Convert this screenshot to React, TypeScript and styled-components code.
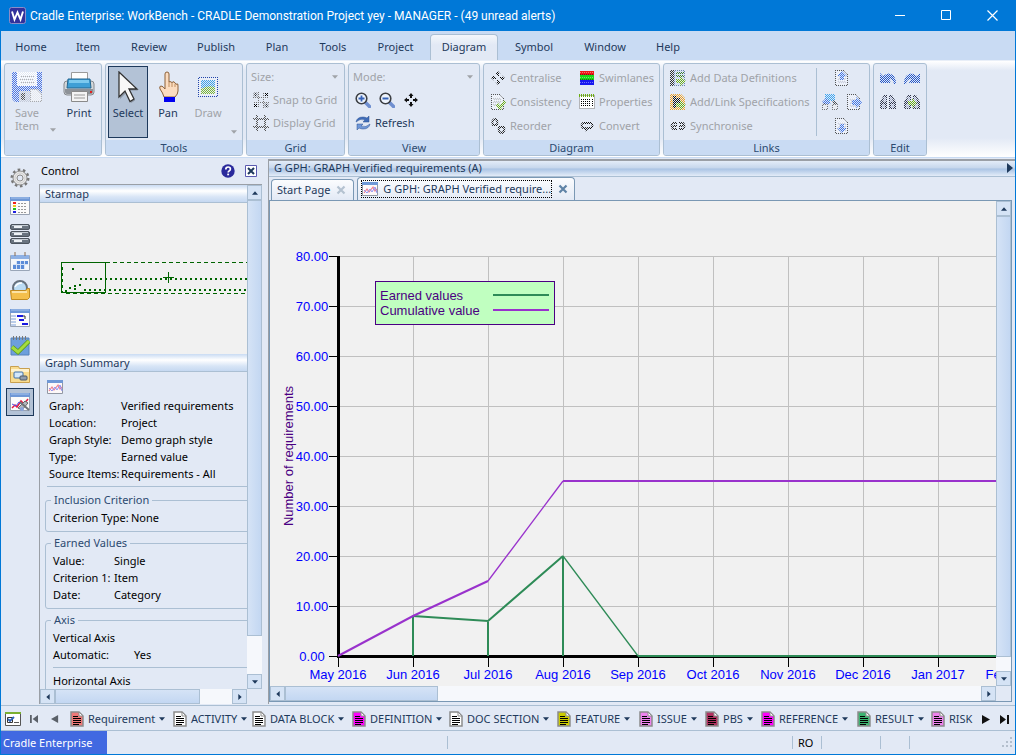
import React from 'react';
import styled, { createGlobalStyle, css } from 'styled-components';

const ui = `"Noto Sans", "Open Sans", sans-serif`;
const c = {
  title: '#0078d7',
  menu: '#c9dbf3',
  face: '#e2e9f5',
  line: '#abbfd3',
  dark: '#7a98b4',
  ink: '#1e395b',
  off: '#a0a3a8',
  caption: '#2c4a70',
  canvas: '#f1f1f1',
};

const GlobalStyle = createGlobalStyle`
  *, *::before, *::after { box-sizing: border-box; }
  body { margin: 0; font-family: ${ui}; font-size: 11px; line-height: 14px; color: #000; }
  button, select { font: inherit; color: inherit; background: none; border: 0; padding: 0; margin: 0; }
  svg { display: block; flex: none; }
`;

const Window = styled.div`
  display: flex;
  flex-direction: column;
  height: 100vh;
  border: 1px solid ${c.title};
  border-top: 0;
  background: ${c.face};
  overflow: hidden;
`;

/* ---------- title bar and menu ---------- */

const TitleBar = styled.header`
  display: flex;
  align-items: center;
  flex: none;
  height: 31px;
  padding-left: 8px;
  background: ${c.title};
  color: #fff;
`;
const Title = styled.h1`
  flex: 1;
  margin: 0 0 0 4px;
  font-family: Roboto, ${ui};
  font-size: 12px;
  font-weight: 400;
  line-height: 16px;
  white-space: nowrap;
`;
const WindowButton = styled.button`
  display: grid;
  place-items: center;
  width: 46px;
  height: 30px;
`;
const Menu = styled.nav`
  display: flex;
  align-items: flex-end;
  flex: none;
  height: 30px;
  background: ${c.menu};
  border-bottom: 1px solid #e9eff8;
`;
const MenuTab = styled.button<{ $w: number; $active?: boolean }>`
  width: ${(p) => p.$w}px;
  height: 26px;
  padding-bottom: 1px;
  color: ${c.ink};
  ${(p) =>
    p.$active &&
    css`
      background: linear-gradient(#f4f7fb, ${c.face} 40%);
      border: 1px solid ${c.line};
      border-bottom: 0;
      border-radius: 4px 4px 0 0;
    `}
`;

/* ---------- ribbon ---------- */

const Ribbon = styled.div`
  display: flex;
  gap: 3px;
  flex: none;
  height: 97px;
  padding: 2px 3px 1px;
  background: linear-gradient(#fff, ${c.face} 10%, ${c.face} 80%, #fff);
  border-bottom: 1px solid ${c.menu};
`;
const GroupBox = styled.section<{ $w: number }>`
  display: flex;
  flex-direction: column;
  flex: none;
  width: ${(p) => p.$w}px;
  border: 1px solid ${c.line};
  border-radius: 3px;
  background: ${c.face};
  overflow: hidden;
`;
const GroupBody = styled.div`
  display: flex;
  flex: 1;
  padding: 2px;
`;
const GroupCaption = styled.h2`
  height: 15px;
  margin: 0;
  background: ${c.menu};
  color: ${c.caption};
  font-size: 11px;
  font-weight: 400;
  line-height: 15px;
  text-align: center;
`;
const BigButton = styled.button<{ $active?: boolean }>`
  display: flex;
  flex-direction: column;
  align-items: center;
  width: 40px;
  height: 72px;
  padding-top: 4px;
  border: 1px solid ${(p) => (p.$active ? c.ink : 'transparent')};
  background: ${(p) => (p.$active ? '#b3c2d6' : 'none')};
  color: ${c.ink};
  line-height: 13px;
  &:disabled { color: ${c.off}; }
  svg { margin-bottom: 3px; }
`;
const MoreButton = styled.button<{ $low?: boolean }>`
  display: flex;
  align-items: flex-end;
  justify-content: center;
  width: 12px;
  padding-bottom: ${(p) => (p.$low ? 4 : 6)}px;
`;
const Column = styled.div<{ $w?: number; $tight?: boolean }>`
  display: flex;
  flex-direction: column;
  flex: ${(p) => (p.$w ? 'none' : 1)};
  width: ${(p) => (p.$w ? `${p.$w}px` : 'auto')};
  margin-top: ${(p) => (p.$tight ? -1 : 0)}px;
  & > * { height: ${(p) => (p.$tight ? 23 : 24)}px; }
`;
const Row = styled.div<{ $center?: boolean }>`
  display: flex;
  align-items: center;
  gap: 8px;
  padding-left: ${(p) => (p.$center ? 0 : 4)}px;
  justify-content: ${(p) => (p.$center ? 'center' : 'flex-start')};
`;
const SmallButton = styled.button`
  display: flex;
  align-items: center;
  gap: 4px;
  padding-left: 4px;
  color: ${c.ink};
  white-space: nowrap;
  &:disabled { color: ${c.off}; }
`;
const IconButton = styled.button`
  display: grid;
  place-items: center;
  flex: none;
  width: 16px;
  height: 16px;
`;
const PickerLabel = styled.label`
  display: flex;
  align-items: center;
  padding: 0 4px 0 2px;
  color: ${c.off};
`;
const Picker = styled.select`
  flex: 1;
  min-width: 0;
  appearance: none;
  &:disabled { opacity: 1; }
`;
const Divider = styled.div`
  width: 1px;
  margin: 2px 0;
  background: ${c.line};
`;

/* ---------- work area ---------- */

const WorkArea = styled.main`
  display: flex;
  flex: 1;
  min-height: 0;
  padding-bottom: 1px;
`;
const Rail = styled.nav`
  display: flex;
  flex-direction: column;
  flex: none;
  width: 38px;
  padding: 6px 0 0 5px;
`;
const RailButton = styled.button<{ $active?: boolean }>`
  display: grid;
  place-items: center;
  width: 28px;
  height: 28px;
  border: 1px solid ${(p) => (p.$active ? c.ink : 'transparent')};
  background: ${(p) => (p.$active ? '#b3c2d6' : 'none')};
`;
const ControlPanel = styled.aside`
  display: flex;
  flex-direction: column;
  flex: none;
  width: 223px;
`;
const ControlHeader = styled.div`
  display: flex;
  align-items: center;
  gap: 7px;
  flex: none;
  height: 26px;
  padding: 0 3px 0 2px;
`;
const ControlTitle = styled.h2`
  flex: 1;
  margin: 0;
  font-size: 11px;
  font-weight: 400;
`;
const ScrollFrame = styled.div<{ $doc?: boolean }>`
  display: grid;
  grid-template-columns: minmax(0, 1fr) 15px;
  grid-template-rows: minmax(0, 1fr) 15px;
  flex: 1;
  min-height: 0;
  border-left: 1px solid ${(p) => (p.$doc ? c.dark : '#9a9fa6')};
  border-top: 1px solid ${(p) => (p.$doc ? c.dark : '#9a9fa6')};
  ${(p) =>
    p.$doc &&
    css`
      border-right: 1px solid ${c.dark};
      border-bottom: 1px solid ${c.dark};
      margin: 0 3px 2px 0;
    `}
`;
const Viewport = styled.div<{ $canvas?: boolean }>`
  overflow: hidden;
  background: ${(p) => (p.$canvas ? c.canvas : c.face)};
`;
const SectionTitle = styled.h3`
  height: 18px;
  margin: 0;
  padding: 1px 0 0 5px;
  font-size: 11px;
  font-weight: 400;
  line-height: 16px;
  color: ${c.ink};
  background: linear-gradient(#c9dbf3, #fff 35%, #d8e5f6 70%, #c5d8f1);
  border-bottom: 1px solid ${c.line};
`;
const Starmap = styled.div`
  height: 151px;
  background: ${c.canvas};
`;
const Summary = styled.div`
  padding-left: 5px;
  width: 260px;
`;
const SummaryIcon = styled.div`
  padding: 7px 0 2px 2px;
`;
const Fields = styled.dl<{ $label: number; $indent?: number }>`
  display: grid;
  grid-template-columns: ${(p) => p.$label}px 1fr;
  grid-auto-rows: 17px;
  margin: 0 0 0 ${(p) => p.$indent ?? 2}px;
  line-height: 17px;
  white-space: nowrap;
  dt, dd { margin: 0; }
`;
const Rule = styled.hr<{ $after: number }>`
  height: 1px;
  margin: 4px 0 ${(p) => p.$after}px 2px;
  border: 0;
  background: ${c.line};
`;
const FieldGroup = styled.fieldset`
  margin: 0 0 4px;
  padding: 2px 0 5px 5px;
  border: 1px solid ${c.line};
  border-radius: 3px;
  legend {
    padding: 0 3px;
    color: ${c.caption};
  }
`;
const Heading = styled.div`
  height: 17px;
  padding-left: 2px;
  line-height: 17px;
`;

/* ---------- scroll bars ---------- */

const Track = styled.div<{ $across?: boolean }>`
  display: flex;
  flex-direction: ${(p) => (p.$across ? 'row' : 'column')};
  background: #f6f8fc;
`;
const TrackButton = styled.button`
  display: grid;
  place-items: center;
  flex: none;
  width: 15px;
  height: 15px;
  border: 1px solid ${c.line};
  background: #d5e3f5;
`;
const TrackRun = styled.div<{ $across?: boolean; $size: number }>`
  flex: 1;
  &::before {
    content: '';
    display: block;
    width: ${(p) => (p.$across ? `${p.$size}%` : '100%')};
    height: ${(p) => (p.$across ? '100%' : `${p.$size}%`)};
    border: 1px solid ${c.line};
    background: linear-gradient(${(p) => (p.$across ? '180deg' : '90deg')}, #d5e3f6, #c3d7f2);
  }
`;

/* ---------- document ---------- */

const Document = styled.section`
  display: flex;
  flex-direction: column;
  flex: 1;
  min-width: 0;
  margin: 1px 0 0 6px;
  border-top: 2px solid #9a9fa6;
  border-left: 1px solid #9a9fa6;
`;
const DocTitle = styled.h2`
  display: flex;
  align-items: center;
  justify-content: space-between;
  flex: none;
  height: 16px;
  margin: 0;
  padding: 0 2px 1px 5px;
  font-size: 11px;
  font-weight: 400;
  line-height: 14px;
  color: ${c.ink};
  background: linear-gradient(#e3ecf8, #c5d6ec 48%, #a9c3e4 52%, #e3ecf8);
  border-bottom: 1px solid ${c.line};
`;
const DocTabs = styled.div`
  display: flex;
  align-items: flex-end;
  flex: none;
  height: 23px;
  padding-left: 2px;
  gap: 3px;
`;
const DocTab = styled.div<{ $active?: boolean }>`
  display: flex;
  align-items: center;
  gap: 6px;
  height: ${(p) => (p.$active ? 24 : 21)}px;
  margin-bottom: ${(p) => (p.$active ? -1 : 0)}px;
  padding: ${(p) => (p.$active ? '0 6px 1px 3px' : '0 7px 0 5px')};
  border: 1px solid ${c.dark};
  border-bottom: 0;
  border-radius: 4px 4px 0 0;
  background: linear-gradient(#fbfcfe, ${c.face});
  color: ${c.ink};
`;
const DocTabName = styled.button<{ $active?: boolean }>`
  display: flex;
  align-items: center;
  gap: 5px;
  height: 18px;
  white-space: nowrap;
  border: ${(p) => (p.$active ? '1px dotted #000' : '0')};
`;
const CloseButton = styled.button`
  display: grid;
  place-items: center;
  width: 10px;
  height: 10px;
`;

/* ---------- bottom bars ---------- */

const ItemBar = styled.footer`
  display: flex;
  align-items: center;
  flex: none;
  height: 26px;
  padding-top: 2px;
  border-top: 1px solid ${c.line};
  border-bottom: 1px solid ${c.line};
`;
const Lead = styled.div`
  display: flex;
  align-items: center;
  gap: 5px;
  flex: none;
  width: 69px;
  padding-left: 4px;
`;
const ItemList = styled.div`
  display: flex;
  flex: 1;
  min-width: 0;
  overflow: hidden;
`;
const ItemButton = styled.button<{ $w: number }>`
  display: flex;
  align-items: center;
  gap: 4px;
  flex: none;
  width: ${(p) => p.$w}px;
  white-space: nowrap;
  color: ${c.ink};
`;
const Trail = styled.div`
  display: flex;
  gap: 10px;
  flex: none;
  padding-right: 6px;
`;
const StatusBar = styled.footer`
  display: flex;
  align-items: center;
  flex: none;
  height: 23px;
`;
const Product = styled.div`
  align-self: stretch;
  width: 106px;
  padding: 5px 0 0 2px;
  background: #4169e1;
  color: #fff;
`;
const StatusCell = styled.div<{ $w?: number; $line?: boolean }>`
  flex: ${(p) => (p.$w ? 'none' : 1)};
  width: ${(p) => (p.$w ? `${p.$w}px` : 'auto')};
  height: 13px;
  line-height: 13px;
  padding-left: 5px;
  border-left: ${(p) => (p.$line ? `1px solid ${c.line}` : '0')};
`;

/* ---------- icons ---------- */

type IconProps = { size?: number; box?: number; off?: boolean; children: React.ReactNode };

/* An icon on a square grid; a disabled one shows through a one-pixel checkerboard. */
const checker = (box: number) =>
  Array.from({ length: box }, (_, y) => `M${y % 2} ${y + 0.5}H${box}`).join('');

function Icon({ size = 16, box = 16, off, children }: IconProps) {
  return (
    <svg width={size} height={size} viewBox={`0 0 ${box} ${box}`} aria-hidden="true">
      {children}
      {off && <path d={checker(box)} stroke={c.face} strokeDasharray="1 1" shapeRendering="crispEdges" />}
    </svg>
  );
}

const arrows = {
  down: 'M0 0h7L3.500 4z',
  up: 'M0 4h7L3.500 0z',
  left: 'M4 0v7L0 3.500z',
  right: 'M0 0v7l4-3.500z',
};
function Arrow({ dir = 'down', color = c.ink }: { dir?: keyof typeof arrows; color?: string }) {
  const upright = dir === 'down' || dir === 'up';
  return (
    <svg
      width={upright ? 6 : 4}
      height={upright ? 4 : 6}
      viewBox={upright ? '0 0 7 4' : '0 0 4 7'}
      aria-hidden="true"
    >
      <path d={arrows[dir]} fill={color} />
    </svg>
  );
}

const AppLogo = () => (
  <svg width="17" height="17" viewBox="0 0 17 17" aria-hidden="true">
    <rect x=".5" y=".5" width="16" height="16" rx="2" fill="#31319c" stroke="#8c8cc8" />
    <path d="M3 4.500l2.500 8L8.500 5.500l3 7L14 4.500" fill="none" stroke="#fff" strokeWidth="1.900" />
  </svg>
);

const SaveIcon = () => (
  <Icon size={32} box={32} off>
    <path d="M1 1h30v30H4l-3-3z" fill="#4a74e4" />
    <path d="M6 1h20v14H6z" fill="#fff" />
    <path d="M9 5.500h14M9 8.500h14M9 11.500h14" stroke="#b0b0b0" />
    <path d="M8 20h14v11H8z" fill="#c4cad8" />
    <path d="M10 22h4v7h-4z" fill="#555" />
    <path d="M19 18h8l4 4v9H19z" fill="#aaa" />
    <path d="M20 19h6l4 4v7H20z" fill="#f6f6f6" />
  </Icon>
);
const PrintIcon = () => (
  <Icon size={32} box={32}>
    <path d="M8.500 1.500h16v8h-16z" fill="#fdfdfd" stroke="#9a9a9a" />
    <rect x="1" y="10" width="30" height="14" rx="3" fill="#d4d7da" stroke="#85898e" />
    <path d="M2 18h28v3q0 2-2 2H4q-2 0-2-2z" fill="#8d9298" />
    <path d="M5 8h22l1 9H4z" fill="#3f9fd6" stroke="#23658f" />
    <path d="M6 9h20v3H6z" fill="#7cc9ee" />
    <path d="M8.500 20.500h16v10h-16z" fill="#f4f4f4" stroke="#8a8a8a" />
    <path d="M11 24h11M11 27h11" stroke="#9a9a9a" />
    <path d="M27 20h2v2h-2z" fill="#e02020" />
  </Icon>
);
const SelectIcon = () => (
  <Icon size={32} box={32}>
    <path d="M7 2v25l6-6 5 10 4-2.500-5-10h8z" fill="#333" opacity=".3" transform="translate(1 1)" />
    <path d="M7 1v25l6-6 5 10.500 4-2.500-5-10h8z" fill="#f8f8f8" stroke="#333" strokeWidth="1.300" />
  </Icon>
);
const HandIcon = () => (
  <Icon size={32} box={32}>
    <path
      d="M13 3q0-2 2-2t2 2v8q1-1 2 0t2 0 2 1 2 1 1 2v5q0 3-3 6H12q-1-4-4-8-1-3 1-3 2 0 4 3z"
      fill="#fbdcc0"
      stroke="#8c6038"
    />
    <path d="M17 11v5M20 12v4M23 13v3" stroke="#c08f60" />
    <path d="M12 26h11v5H12z" fill="#0000f0" />
  </Icon>
);
const DrawIcon = () => (
  <Icon size={32} box={32} off>
    <path d="M6 6h20v20H6z" fill="#2244aa" />
    <path d="M7 7h18v18H7z" fill="#eef1f8" />
    <path d="M9 9h14v8H9z" fill="#3aa0e8" />
    <path d="M9 18q6-4 14-2v7H9z" fill="#7cb82f" />
  </Icon>
);
const SnapIcon = () => (
  <Icon off>
    <path d="M5.500 0v16M10.500 0v16M0 5.500h16M0 10.500h16" stroke="#777" />
    <path d="M1 1l3 3M4 1L1 4M12 1l3 3M15 1l-3 3M1 12l3 3M4 12l-3 3M12 12l3 3M15 12l-3 3" stroke="#000" strokeWidth="1.500" />
  </Icon>
);
const GridIcon = () => (
  <Icon off>
    <path d="M4 0v16M12 0v16M0 4h16M0 12h16" stroke="#555" strokeWidth="2" />
  </Icon>
);
const ZoomIcon = ({ plus }: { plus?: boolean }) => (
  <Icon>
    <path d="M10.500 10.500l4 4" stroke="#6f8fd0" strokeWidth="3.500" strokeLinecap="round" />
    <circle cx="6.500" cy="6.500" r="5.300" fill="#eef4fd" stroke="#3c3f44" strokeWidth="1.600" />
    <path d={plus ? 'M3.500 6.500h6M6.500 3.500v6' : 'M3.500 6.500h6'} stroke="#3562b8" strokeWidth="1.800" />
  </Icon>
);
const MoveGlyph = ({ off }: { off?: boolean }) => (
  <Icon off={off}>
    <path d="M8 1l2.500 3h-1.500v2H7V4H5.500zM8 15l2.500-3h-1.500v-2H7v2H5.500zM1 8l3-2.500V7h2v2H4v1.500zM15 8l-3-2.500V7h-2v2h2v1.500z" fill="#111" />
  </Icon>
);
const RefreshIcon = () => (
  <Icon>
    <path d="M1 7q1-5 7-5 2 0 4 1l2-2v6H8l2-2Q5 3 1 7z" fill="#3f6cb8" stroke="#2b5093" strokeWidth=".5" />
    <path d="M15 9q-1 5-7 5-2 0-4-1l-2 2V9h6l-2 2q5 2 9-2z" fill="#6f97d8" stroke="#2b5093" strokeWidth=".5" />
  </Icon>
);
const ConsistencyIcon = () => (
  <Icon off>
    <path d="M1 0h9l4 4v12H1z" fill="#555" />
    <path d="M2 1h8l3 3v11H2z" fill="#f6f8fb" />
    <path d="M3 5h8M3 8h8M3 11h5" stroke="#999" />
    <path d="M7 10l3 4 5-7" fill="none" stroke="#6bb010" strokeWidth="3" />
  </Icon>
);
const ReorderIcon = () => (
  <Icon off>
    <path d="M3 7q-2-5 2-6 3 0 2 6zM9 9q-1 6 3 6 3-1 2-6z" fill="none" stroke="#222" strokeWidth="2" />
  </Icon>
);
const SwimlanesIcon = () => (
  <Icon>
    <path d="M1 1h14v4H1z" fill="#f01818" />
    <path d="M1 5h14v5H1z" fill="#18d818" />
    <path d="M1 10h14v5H1z" fill="#1818f0" />
    <path d="M1 2.500h14M1 7.500h14M1 12.500h14" stroke="#fff" strokeDasharray="1 1" opacity=".4" />
    <path d="M1 4.500h14M1 9.500h14" stroke="#222" strokeDasharray="1 1" opacity=".6" />
  </Icon>
);
const PropertiesIcon = () => (
  <Icon>
    <path d="M.5 1.500h15v13H.5z" fill="#fff" stroke="#777" strokeDasharray="1 1" />
    <path d="M0 1.500h16" stroke="#6cae10" strokeWidth="3" strokeDasharray="1 1" />
    <path d="M2 5.500h9M2 7.500h9M2 9.500h9M2 11.500h9" stroke="#000" strokeDasharray="1 1" />
    <path d="M13.500 5v1M13.500 7v1M13.500 9v1M13.500 11v1" stroke="#000" />
  </Icon>
);
const ConvertIcon = () => (
  <Icon off>
    <path d="M4 5h8q3 2 0 5H9l-2 2-1-2H4q-3-3 0-5z" fill="none" stroke="#111" strokeWidth="1.800" />
  </Icon>
);
const AddDataIcon = () => (
  <Icon off>
    <path d="M0 0h15v16H0z" fill="#6884b0" />
    <path d="M5 1h9v14H5z" fill="#c4d5ee" />
    <path d="M0 0h4v16H0z" fill="#333" />
    <path d="M6 3h8M6 6h8" stroke="#3a7a30" strokeWidth="2" />
    <path d="M6 9h4V6l6 5-6 5v-3H6z" fill="#6db010" />
  </Icon>
);
const AddSpecIcon = () => (
  <Icon off>
    <path d="M0 0h11l4 4v12H0z" fill="#f0a020" />
    <path d="M3 2h3v12H3zM6 4h4v8H6z" fill="#111" />
    <path d="M6 9h4V6l6 5-6 5v-3H6z" fill="#6db010" />
  </Icon>
);
const SyncIcon = () => (
  <Icon off>
    <path d="M7 5H3Q0 8 3 11h4M3 8h4M9 5h4q3 3 0 6H9M13 8H9" fill="none" stroke="#222" strokeWidth="1.800" />
  </Icon>
);
const PageIcon = ({ arrow }: { arrow: string }) => (
  <Icon off>
    <path d="M1 0h9l4 4v12H1z" fill="#555" />
    <path d="M2 1h8l3 3v11H2z" fill="#f4f6fc" />
    <path d="M4 6h8M4 9h8M4 12h8" stroke="#aab" />
    <path d={arrow} fill="#3f74e6" />
  </Icon>
);
const TreeIcon = () => (
  <Icon off>
    <path d="M3 0h10v7H3z" fill="#3aa4f0" />
    <path d="M4 7l-3 4M11 7l4 4" stroke="#333" strokeWidth="2" />
    <path d="M0 8l4-4 5 5-4 2z" fill="#3f74e6" />
    <path d="M0 10h6v6H0zM10 10h6v6h-6z" fill="#777" />
    <path d="M1 11h4v4H1zM11 11h4v4h-4z" fill="#eee" />
  </Icon>
);
const UndoIcon = ({ redo }: { redo?: boolean }) => (
  <Icon off>
    <path
      d="M0 3l3 3q6-5 11 0 2 3 2 8h-2q-1-5-5-5l2 4H0z"
      fill="#2456c8"
      transform={redo ? 'matrix(-1 0 0 1 16 0)' : undefined}
    />
  </Icon>
);
const FindIcon = ({ next }: { next?: boolean }) => (
  <Icon off>
    <path d="M4 1h3v14H0V8zM9 1h3l4 7v7H9z" fill="#30364c" />
    <path d="M4 3h2v5H3zM10 3h2l1 5h-3zM2 10h3v4H2zM11 10h3v4h-3z" fill="#a8b0cc" />
    {next && <path d="M4 7h4V4l5 5-5 5v-3H4z" fill="#6db010" />}
  </Icon>
);

const Pane = ({ children }: { children: React.ReactNode }) => (
  <>
    <path d="M.5 1.500h19v17H.5z" fill="#fbfbfb" stroke="#98a2b2" />
    <path d="M0 1h20v4H0z" fill="#6f98d6" />
    <path d="M1 2h18" stroke="#a9c4ec" />
    {children}
  </>
);
const GearIcon = () => (
  <Icon size={20} box={20}>
    <circle cx="10" cy="10" r="8" fill="none" stroke="#777" strokeWidth="3" strokeDasharray="2.500 2.530" />
    <circle cx="10" cy="10" r="7" fill="#e8e8e8" stroke="#8c8c8c" />
    <circle cx="10" cy="10" r="3" fill={c.face} stroke="#8c8c8c" />
    <circle cx="10" cy="10" r="5" fill="none" stroke="#cfcfcf" />
  </Icon>
);
const ListIcon = () => (
  <Icon size={20} box={20}>
    <Pane>
      <path d="M3 6h3v2H3z" fill="#f02020" />
      <path d="M3 9h3v2H3z" fill="#f0c020" />
      <path d="M3 12h3v2H3z" fill="#20c020" />
      <path d="M3 15h3v2H3z" fill="#2020e0" />
      <path d="M8 7.500h9M8 10.500h9M8 13.500h9M8 16.500h9" stroke="#999" strokeDasharray="2 1" />
    </Pane>
  </Icon>
);
const DatabaseIcon = () => (
  <Icon size={20} box={20}>
    {[0, 7, 14].map((y) => (
      <g key={y}>
        <rect x=".5" y={y + 0.5} width="19" height="5" rx="1.500" fill="#6a7480" stroke="#4c545e" />
        <path d={`M2 ${y + 1.5}h16`} stroke="#c4ccd4" />
        <path d={`M4 ${y + 3}h8`} stroke="#eef2f6" strokeWidth="2" />
      </g>
    ))}
  </Icon>
);
const CalendarIcon = () => (
  <Icon size={20} box={20}>
    <path d="M.5 3.500h19v15H.5z" fill="#f4f6fa" stroke="#9aa6b8" />
    <path d="M1 3h18v4H1z" fill="#8db0e4" />
    <path d="M5 0v4M15 0v4" stroke="#8a6d50" />
    <path d="M6 9h12v4H6zM3 13h11v4H3z" fill="#5c8cd8" />
    <path d="M3 12.500h15M6.500 9v8M10.500 9v8M14.500 9v8" stroke="#d5e2f6" />
  </Icon>
);
const SearchFolderIcon = () => (
  <Icon size={20} box={20}>
    <circle cx="10" cy="8" r="7" fill="#bcdcf4" stroke="#68727e" strokeWidth="2" />
    <path d="M5 7q2-4 7-4" stroke="#fff" strokeWidth="1.500" fill="none" />
    <path d="M.5 10.500h15l2-2h2v9l-2 2H1.500z" fill="#f4bf4c" stroke="#c08a20" />
    <path d="M2 12h15" stroke="#fce3a4" strokeWidth="2" />
  </Icon>
);
const PlanIcon = () => (
  <Icon size={20} box={20}>
    <Pane>
      <path d="M1 8h5M1 11h5M1 14h5M1 17h5" stroke="#7a9ed8" />
      <path d="M7 7h6v2H7zM9 11h5v2H9zM12 15h6v2h-6z" fill="#1818e0" />
      <path d="M13 8h2v3" fill="none" stroke="#333" />
    </Pane>
  </Icon>
);
const TaskIcon = () => (
  <Icon size={20} box={20}>
    <path d="M1 2h18v17H1z" fill="#6d9fdc" stroke="#5782ba" />
    <path d="M3.500 0v4M6.500 0v4M9.500 0v4M12.500 0v4M15.500 0v4" stroke="#777" />
    <path d="M2 11l6 5L19 5" fill="none" stroke="#5c9a18" strokeWidth="4.500" />
    <path d="M2 11l6 5L19 5" fill="none" stroke="#a4dc40" strokeWidth="3" />
  </Icon>
);
const FolderIcon = () => (
  <Icon size={20} box={20}>
    <path d="M.5 2.500h8l1 2h10v14H.5z" fill="#f8dc90" stroke="#c8a050" />
    <path d="M1 5h18v3H1z" fill="#fff2cc" />
    <rect x="4" y="8" width="9" height="6" rx="1" fill="#d4e8fa" stroke="#3d6ea8" />
    <rect x="10" y="12" width="7" height="4" rx="1" fill="#8f9cad" stroke="#4c5868" />
  </Icon>
);
const GraphToolIcon = () => (
  <Icon size={20} box={20}>
    <Pane>
      <path d="M2 16l3-3 2 2 4-6 3 3 4-5" fill="none" stroke="#e81840" strokeWidth="1.500" />
      <path d="M2 12l4 2 3-4 4 3" fill="none" stroke="#5050e8" />
      <path d="M8 16l7-7 3 2-6 7z" fill="#b4b8be" stroke="#666" />
      <path d="M10 10l9 8" stroke="#707478" strokeWidth="2" />
      <circle cx="12" cy="17" r="2" fill="#8aa4dc" />
    </Pane>
  </Icon>
);
const GraphIcon = () => (
  <Icon>
    <path d="M.5 1.500h15v13H.5z" fill="#fdf8f9" stroke="#9298a4" />
    <path d="M0 1h16v3H0z" fill="#6f98d6" />
    <path d="M2 12l3-4 2 3 4-5 2 4 2-2" fill="none" stroke="#f08090" strokeWidth="1.200" />
    <path d="M2 9l3 3 3-4 2 3 3-5 2 6" fill="none" stroke="#9094f4" />
  </Icon>
);
const CloseGlyph = ({ color }: { color: string }) => (
  <svg width="10" height="10" viewBox="0 0 10 10" aria-hidden="true">
    <path d="M1.500 1.500l7 7M8.500 1.500l-7 7" stroke={color} strokeWidth="2.200" />
  </svg>
);
const SheetIcon = ({ fill }: { fill: string }) => (
  <svg width="14" height="16" viewBox="0 0 14 16" aria-hidden="true">
    <path d="M1 1h8l4 4v10H1z" fill={fill} stroke="#8c8c8c" strokeWidth="1.500" />
    <path d="M9 1v4h4z" fill="#fff" stroke="#8c8c8c" />
    <path d="M3 5.500h5M3 7.500h8M3 9.500h8M3 11.500h8M3 13.500h6" stroke="#000" />
  </svg>
);
const ChecklistIcon = () => (
  <Icon>
    <path d="M.5 1.500h15v13H.5z" fill="#fff" stroke="#555" />
    <path d="M0 2h16" stroke="#7bb030" strokeWidth="2" />
    <path d="M2.500 6.500h5v5h-5z" fill="#fff" stroke="#333" />
    <path d="M3 8l2 2 4-4" fill="none" stroke="#2f62b8" strokeWidth="1.800" />
    <path d="M9 11.500h5" stroke="#555" />
  </Icon>
);
const StepIcon = ({ flip, end, off }: { flip?: boolean; end?: boolean; off?: boolean }) => (
  <svg width={off ? 8 : 9} height={off ? 8 : 9} viewBox="0 0 9 9" aria-hidden="true">
    <g transform={flip ? 'matrix(-1 0 0 1 9 0)' : undefined} fill={off ? '#5a6068' : '#111'}>
      <path d={end ? 'M0 0l6 4.500L0 9zM7 0h2v9H7z' : 'M1 0l8 4.500L1 9z'} />
    </g>
  </svg>
);

/* ---------- chart ---------- */

const MONTHS = ['May 2016', 'Jun 2016', 'Jul 2016', 'Aug 2016', 'Sep 2016', 'Oct 2016', 'Nov 2016', 'Dec 2016', 'Jan 2017', 'Feb 2017'];
const EARNED = [0, 8, 7, 20, 0];
const CUMULATIVE = [0, 8, 15, 35];
const ORIGIN = { x: 68, y: 455 };
const STEP = 75;
const END = ORIGIN.x + STEP * MONTHS.length;
const px = (month: number) => ORIGIN.x + month * STEP;
const py = (value: number) => ORIGIN.y - value * 5;
const points = (values: number[], from = 0) => values.map((v, i) => `${px(i + from)},${py(v)}`).join(' ');

const ChartText = styled.text`
  font-family: "Liberation Sans", Arial, sans-serif;
  font-size: 13px;
`;

function Chart() {
  return (
    <svg width={END} height="486" role="img" aria-label="Verified requirements graph">
      <g shapeRendering="crispEdges" strokeWidth="1">
        {[80, 70, 60, 50, 40, 30, 20, 10].map((v) => (
          <path key={v} d={`M${ORIGIN.x} ${py(v) + 0.5}H${END}`} stroke="#c0c0c0" />
        ))}
        {MONTHS.map((m, i) => (
          <path key={m} d={`M${px(i) + 0.5} ${py(80)}V${ORIGIN.y}`} stroke="#c0c0c0" />
        ))}
        {[80, 70, 60, 50, 40, 30, 20, 10, 0].map((v) => (
          <path key={v} d={`M59 ${py(v) + 0.5}H${ORIGIN.x}`} stroke="#000" />
        ))}
        {MONTHS.map((m, i) => (
          <path key={m} d={`M${px(i) + 0.5} ${ORIGIN.y}v11`} stroke="#000" />
        ))}
        <path d={`M68.500 55V457M67 455.500H${END}`} stroke="#000" strokeWidth="3" />
      </g>
      <g fill="none" stroke="#2e8b57" strokeWidth="2">
        <path d={`M143 416V455M218 421V455M293 356V455M${px(4)} 455H${END}`} shapeRendering="crispEdges" />
        <polyline points={points(EARNED.slice(1, 4), 1)} />
        <polyline points={points(EARNED.slice(3), 3)} strokeWidth="1.300" />
      </g>
      <g fill="none" stroke="#9932cc" strokeWidth="2">
        <polyline points={points(CUMULATIVE.slice(0, 3))} />
        <polyline points={points(CUMULATIVE.slice(2), 2)} strokeWidth="1.300" />
        <path d={`M${px(3)} ${py(35)}H${END}`} shapeRendering="crispEdges" />
      </g>
      <g fill="#0000ff" textAnchor="middle">
        {[80, 70, 60, 50, 40, 30, 20, 10, 0].map((v) => (
          <ChartText key={v} x="42" y={py(v) + 5}>{v.toFixed(2)}</ChartText>
        ))}
        {MONTHS.map((m, i) => (
          <ChartText key={m} x={px(i)} y="478">{m}</ChartText>
        ))}
      </g>
      <g fill="#4b0082">
        <ChartText textAnchor="middle" transform="translate(23 255) rotate(-90)">Number of requirements</ChartText>
        <rect x="105.500" y="80.500" width="179" height="43" fill="#c0ffc0" stroke="#4b0082" />
        <ChartText x="110" y="99">Earned values</ChartText>
        <ChartText x="110" y="114">Cumulative value</ChartText>
        <path d="M223 94H279" stroke="#2e8b57" strokeWidth="2" />
        <path d="M223 109H279" stroke="#9932cc" strokeWidth="2" />
      </g>
    </svg>
  );
}

const StarmapDrawing = () => (
  <svg width="1000" height="150" role="img" aria-label="Starmap" shapeRendering="crispEdges">
    <g fill="none" stroke="#006400">
      <path d="M21.500 59.500H65.500V89.500H21.500z" />
      <path d="M66 59.500H1000M26 90.500H1000" strokeDasharray="4 3" />
      <path d="M22 64V89" strokeWidth="2" strokeDasharray="3 3" />
      <path d="M40 76H1000M44 87H1000" strokeWidth="2" strokeDasharray="2 3" />
      <path d="M128.500 69V80M123 74.500h11" />
    </g>
    <path d="M32 65h2v2h-2zM39 81h2v2h-2zM34 82h2v2h-2zM29 84h2v2h-2zM34 85h2v2h-2zM25 87h2v2h-2z" fill="#006400" />
  </svg>
);

/* ---------- parts ---------- */

function Scrollbar({ across, size }: { across?: boolean; size: number }) {
  return (
    <Track $across={across}>
      <TrackButton aria-label={across ? 'Scroll left' : 'Scroll up'}>
        <Arrow dir={across ? 'left' : 'up'} />
      </TrackButton>
      <TrackRun $across={across} $size={size} />
      <TrackButton aria-label={across ? 'Scroll right' : 'Scroll down'}>
        <Arrow dir={across ? 'right' : 'down'} />
      </TrackButton>
    </Track>
  );
}

function Group({ w, caption, children }: { w: number; caption?: string; children: React.ReactNode }) {
  return (
    <GroupBox $w={w}>
      <GroupBody>{children}</GroupBody>
      <GroupCaption>{caption}</GroupCaption>
    </GroupBox>
  );
}

const MENU: [string, number][] = [
  ['Home', 60], ['Item', 54], ['Review', 68], ['Publish', 66], ['Plan', 56], ['Tools', 56],
  ['Project', 69], ['Diagram', 68], ['Symbol', 72], ['Window', 70], ['Help', 56],
];

const RAIL: [string, () => React.JSX.Element][] = [
  ['Setup', GearIcon], ['Items', ListIcon], ['Database', DatabaseIcon], ['Calendar', CalendarIcon],
  ['Queries', SearchFolderIcon], ['Plans', PlanIcon], ['Tasks', TaskIcon], ['Folders', FolderIcon],
  ['Graph', GraphToolIcon],
];

const ITEMS: [string, string, number][] = [
  ['Requirement', '#f07878', 103], ['ACTIVITY', '#fff', 79], ['DATA BLOCK', '#fff', 100],
  ['DEFINITION', '#ff00ff', 97], ['DOC SECTION', '#fff', 108], ['FEATURE', '#cccc00', 82],
  ['ISSUE', '#ee82ee', 66], ['PBS', '#b03060', 56], ['REFERENCE', '#ff00ff', 96],
  ['RESULT', '#3cb371', 74], ['RISK', '#ee82ee', 50],
];

const SUMMARY = [
  ['Graph:', 'Verified requirements'], ['Location:', 'Project'], ['Graph Style:', 'Demo graph style'],
  ['Type:', 'Earned value'], ['Source Items:', 'Requirements - All'],
];
const EARNED_FIELDS = [['Value:', 'Single'], ['Criterion 1:', 'Item'], ['Date:', 'Category']];

function FieldList({ rows, label, indent }: { rows: string[][]; label: number; indent?: number }) {
  return (
    <Fields $label={label} $indent={indent}>
      {rows.map(([name, value]) => (
        <React.Fragment key={name}>
          <dt>{name}</dt>
          <dd>{value}</dd>
        </React.Fragment>
      ))}
    </Fields>
  );
}

function RibbonBar() {
  return (
    <Ribbon>
      <Group w={98}>
        <BigButton disabled><SaveIcon />Save<br />Item</BigButton>
        <MoreButton aria-label="Save options"><Arrow color={c.off} /></MoreButton>
        <BigButton><PrintIcon />Print</BigButton>
      </Group>
      <Group w={138} caption="Tools">
        <BigButton $active><SelectIcon />Select</BigButton>
        <BigButton><HandIcon />Pan</BigButton>
        <BigButton disabled><DrawIcon />Draw</BigButton>
        <MoreButton $low aria-label="Draw options"><Arrow color={c.off} /></MoreButton>
      </Group>
      <Group w={99} caption="Grid">
        <Column $tight>
          <PickerLabel>Size:<Picker disabled /><Arrow color={c.off} /></PickerLabel>
          <SmallButton disabled><SnapIcon />Snap to Grid</SmallButton>
          <SmallButton disabled><GridIcon />Display Grid</SmallButton>
        </Column>
      </Group>
      <Group w={132} caption="View">
        <Column $tight>
          <PickerLabel>Mode:<Picker disabled /><Arrow color={c.off} /></PickerLabel>
          <Row>
            <IconButton aria-label="Zoom in"><ZoomIcon plus /></IconButton>
            <IconButton aria-label="Zoom out"><ZoomIcon /></IconButton>
            <IconButton aria-label="Zoom to fit"><MoveGlyph /></IconButton>
          </Row>
          <SmallButton><RefreshIcon />Refresh</SmallButton>
        </Column>
      </Group>
      <Group w={177} caption="Diagram">
        <Column $w={89}>
          <SmallButton disabled><MoveGlyph off />Centralise</SmallButton>
          <SmallButton disabled><ConsistencyIcon />Consistency</SmallButton>
          <SmallButton disabled><ReorderIcon />Reorder</SmallButton>
        </Column>
        <Column>
          <SmallButton disabled><SwimlanesIcon />Swimlanes</SmallButton>
          <SmallButton disabled><PropertiesIcon />Properties</SmallButton>
          <SmallButton disabled><ConvertIcon />Convert</SmallButton>
        </Column>
      </Group>
      <Group w={207} caption="Links">
        <Column $w={150}>
          <SmallButton disabled><AddDataIcon />Add Data Definitions</SmallButton>
          <SmallButton disabled><AddSpecIcon />Add/Link Specifications</SmallButton>
          <SmallButton disabled><SyncIcon />Synchronise</SmallButton>
        </Column>
        <Divider />
        <Column>
          <Row $center>
            <IconButton disabled aria-label="Link up"><PageIcon arrow="M8 1l5 5h-3v4H6V6H3z" /></IconButton>
          </Row>
          <Row $center>
            <IconButton disabled aria-label="Link tree"><TreeIcon /></IconButton>
            <IconButton disabled aria-label="Link across"><PageIcon arrow="M6 6h4V3l6 5.500-6 5.500v-3H6z" /></IconButton>
          </Row>
          <Row $center>
            <IconButton disabled aria-label="Link down"><PageIcon arrow="M8 15l5-5h-3V6H6v4H3z" /></IconButton>
          </Row>
        </Column>
      </Group>
      <Group w={54} caption="Edit">
        <Column>
          <Row $center>
            <IconButton disabled aria-label="Undo"><UndoIcon /></IconButton>
            <IconButton disabled aria-label="Redo"><UndoIcon redo /></IconButton>
          </Row>
          <Row $center>
            <IconButton disabled aria-label="Find"><FindIcon /></IconButton>
            <IconButton disabled aria-label="Find next"><FindIcon next /></IconButton>
          </Row>
        </Column>
      </Group>
    </Ribbon>
  );
}

function Control() {
  return (
    <ControlPanel>
      <ControlHeader>
        <ControlTitle>Control</ControlTitle>
        <IconButton aria-label="Help">
          <Icon size={14} box={14}>
            <circle cx="7" cy="7" r="6.700" fill="#2a2a9c" />
            <path d="M4.800 5.400q0-2.400 2.300-2.400t2.300 2q0 1.300-1.300 2-.9.500-.9 1.400" fill="none" stroke="#fff" strokeWidth="1.700" />
            <path d="M6.200 9.600h1.900v1.700H6.200z" fill="#fff" />
          </Icon>
        </IconButton>
        <IconButton aria-label="Close">
          <Icon size={12} box={12}>
            <path d="M.5 .5h11v11H.5z" fill="#fff" stroke="#5a5ab0" />
            <path d="M3 3l6 6M9 3L3 9" stroke={c.ink} strokeWidth="2" />
          </Icon>
        </IconButton>
      </ControlHeader>
      <ScrollFrame>
        <Viewport>
          <SectionTitle>Starmap</SectionTitle>
          <Starmap><StarmapDrawing /></Starmap>
          <SectionTitle>Graph Summary</SectionTitle>
          <Summary>
            <SummaryIcon><GraphIcon /></SummaryIcon>
            <FieldList rows={SUMMARY} label={72} indent={4} />
            <Rule $after={6} />
            <FieldGroup>
              <legend>Inclusion Criterion</legend>
              <FieldList rows={[['Criterion Type:', 'None']]} label={78} />
            </FieldGroup>
            <FieldGroup>
              <legend>Earned Values</legend>
              <FieldList rows={EARNED_FIELDS} label={61} />
            </FieldGroup>
            <FieldGroup>
              <legend>Axis</legend>
              <Heading>Vertical Axis</Heading>
              <FieldList rows={[['Automatic:', 'Yes']]} label={81} />
              <Rule $after={4} />
              <Heading>Horizontal Axis</Heading>
            </FieldGroup>
          </Summary>
        </Viewport>
        <Scrollbar size={92} />
        <Scrollbar across size={82} />
      </ScrollFrame>
    </ControlPanel>
  );
}

export default function App() {
  return (
    <>
      <GlobalStyle />
      <Window>
        <TitleBar>
          <AppLogo />
          <Title>Cradle Enterprise: WorkBench - CRADLE Demonstration Project yey - MANAGER - (49 unread alerts)</Title>
          <WindowButton aria-label="Minimise">
            <svg width="11" height="11"><path d="M0 5.500h10" stroke="#fff" /></svg>
          </WindowButton>
          <WindowButton aria-label="Maximise">
            <svg width="11" height="11"><path d="M.5 .5h9v9h-9z" fill="none" stroke="#fff" /></svg>
          </WindowButton>
          <WindowButton aria-label="Close window">
            <svg width="11" height="11"><path d="M.5 .5l10 10M10.500 .5l-10 10" stroke="#fff" strokeWidth="1.200" /></svg>
          </WindowButton>
        </TitleBar>
        <Menu>
          {MENU.map(([name, w]) => (
            <MenuTab key={name} $w={w} $active={name === 'Diagram'}>{name}</MenuTab>
          ))}
        </Menu>
        <RibbonBar />
        <WorkArea>
          <Rail>
            {RAIL.map(([name, Glyph]) => (
              <RailButton key={name} aria-label={name} $active={name === 'Graph'}><Glyph /></RailButton>
            ))}
          </Rail>
          <Control />
          <Document>
            <DocTitle>
              G GPH: GRAPH Verified requirements (A)
              <svg width="6" height="10" aria-hidden="true"><path d="M0 0l6 5-6 5z" fill={c.ink} /></svg>
            </DocTitle>
            <DocTabs>
              <DocTab>
                <DocTabName>Start Page</DocTabName>
                <CloseButton aria-label="Close Start Page"><CloseGlyph color="#b4c2d0" /></CloseButton>
              </DocTab>
              <DocTab $active>
                <DocTabName $active><GraphIcon />G GPH: GRAPH Verified require...</DocTabName>
                <CloseButton aria-label="Close graph"><CloseGlyph color="#5f83a6" /></CloseButton>
              </DocTab>
            </DocTabs>
            <ScrollFrame $doc>
              <Viewport $canvas><Chart /></Viewport>
              <Scrollbar size={97} />
              <Scrollbar across size={22} />
            </ScrollFrame>
          </Document>
        </WorkArea>
        <ItemBar>
          <Lead>
            <IconButton aria-label="Options"><ChecklistIcon /></IconButton>
            <IconButton aria-label="First"><StepIcon flip end off /></IconButton>
            <IconButton aria-label="Previous"><StepIcon flip off /></IconButton>
          </Lead>
          <ItemList>
            {ITEMS.map(([name, fill, w]) => (
              <ItemButton key={name} $w={w}>
                <SheetIcon fill={fill} />
                {name}
                {name !== 'RISK' && <Arrow />}
              </ItemButton>
            ))}
          </ItemList>
          <Trail>
            <button aria-label="Next"><StepIcon /></button>
            <button aria-label="Last"><StepIcon end /></button>
          </Trail>
        </ItemBar>
        <StatusBar>
          <Product>Cradle Enterprise</Product>
          <StatusCell $w={340} />
          <StatusCell $line />
          <StatusCell $line $w={29}>RO</StatusCell>
          <StatusCell $line $w={59} />
          <StatusCell $line $w={29} />
          <StatusCell $line $w={92} />
          <svg width="14" height="14" aria-hidden="true">
            <path d="M9 1h2v2H9zM9 5h2v2H9zM9 9h2v2H9zM5 5h2v2H5zM5 9h2v2H5zM1 9h2v2H1z" fill="#b4bfcd" />
          </svg>
        </StatusBar>
      </Window>
    </>
  );
}
